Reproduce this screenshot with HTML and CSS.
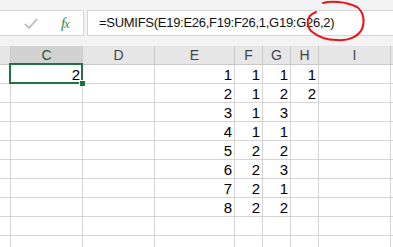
FILE: index.html
```html
<!DOCTYPE html>
<html>
<head>
<title>SUMIFS</title>
<link rel="stylesheet" href="styles.css">
</head>
<body>
<div class="formula-bar">
  <div class="tools">
    <svg class="check" width="14" height="11" viewBox="0 0 14 11"><path d="M1 6 L5 10 L13 1" fill="none" stroke="#c3c3c3" stroke-width="2"/></svg>
    <span class="fx">f<i>x</i></span>
  </div>
  <div class="formula">=SUMIFS(E19:E26,F19:F26,1,G19:G26,2)</div>
  <svg class="scribble" width="70" height="46" viewBox="300 0 70 46"><path d="M323 3 C330 1 345 1 357 7 C364 12 365 22 362 29 C358 37 348 41 337 40 C328 40 318 37 311 31 C306 25 307 18 312 14 L316 12" fill="none" stroke="#e8141a" stroke-width="2" stroke-linecap="round"/></svg>
</div>
<div class="sheet">
  <div class="hd"></div><div class="hd sel">C</div><div class="hd">D</div><div class="hd">E</div><div class="hd">F</div><div class="hd">G</div><div class="hd">H</div><div class="hd">I</div><div class="hd"></div>
</div>
<script>
const sheet = document.querySelector('.sheet');
const rows = [
  ['', '2', '', '1', '1', '1', '1', '', ''],
  ['', '', '', '2', '1', '2', '2', '', ''],
  ['', '', '', '3', '1', '3', '', '', ''],
  ['', '', '', '4', '1', '1', '', '', ''],
  ['', '', '', '5', '2', '2', '', '', ''],
  ['', '', '', '6', '2', '3', '', '', ''],
  ['', '', '', '7', '2', '1', '', '', ''],
  ['', '', '', '8', '2', '2', '', '', ''],
  ['', '', '', '', '', '', '', '', ''],
  ['', '', '', '', '', '', '', '', '']
];
rows.forEach((row, r) => {
  row.forEach((val, c) => {
    const cell = document.createElement('div');
    cell.className = 'cell';
    cell.textContent = val;
    if (r === 0 && c === 1) {
      const box = document.createElement('div');
      box.className = 'active';
      cell.appendChild(box);
    }
    sheet.appendChild(cell);
  });
});
</script>
</body>
</html>
```

FILE: styles.css
```css
body {
  margin: 0;
  background: #f3f3f3;
  font-family: "Liberation Sans", Arial, sans-serif;
  overflow: hidden;
  width: 393px;
  height: 247px;
}

.formula-bar {
  position: relative;
  display: flex;
  gap: 3px;
  padding: 10px 0 10px 0;
  height: 26px;
}

.tools {
  width: 84px;
  box-sizing: border-box;
  background: #fff;
  border: 1px solid #d6d6d6;
  border-left: none;
  display: flex;
  align-items: center;
  padding-left: 24px;
  gap: 23px;
}

.check {
  margin-top: 1px;
}

.fx {
  font-family: "Liberation Serif", serif;
  font-style: italic;
  color: #2f8552;
  font-size: 15px;
  letter-spacing: -1px;
}

.fx i {
  font-size: 12px;
}

.formula {
  flex: 1;
  background: #fff;
  border: 1px solid #d6d6d6;
  border-right: none;
  font-size: 13px;
  letter-spacing: -0.28px;
  line-height: 24px;
  padding-left: 11px;
  color: #111;
}

.scribble {
  position: absolute;
  left: 300px;
  top: 0;
}

.sheet {
  display: grid;
  grid-template-columns: 11px 72px 72px 80px 28px 28px 28px 72px 1fr;
  grid-auto-rows: 19px;
  background: #fff;
}

.hd {
  background: #e6e6e6;
  border-right: 1px solid #cacaca;
  border-bottom: 1px solid #c8c8c8;
  font-size: 14px;
  line-height: 18px;
  text-align: center;
  color: #444;
}

.hd.sel {
  background: #d2d2d2;
  color: #1f5c40;
}

.cell {
  position: relative;
  border-right: 1px solid #d4d4d4;
  border-bottom: 1px solid #d4d4d4;
  font-size: 15px;
  line-height: 19px;
  text-align: right;
  padding-right: 2px;
  color: #000;
}

.active {
  position: absolute;
  z-index: 1;
  left: -2px;
  top: -2px;
  right: -1px;
  bottom: -1px;
  border: 2px solid #217346;
}

.active::after {
  content: "";
  position: absolute;
  right: -4px;
  bottom: -4px;
  width: 5px;
  height: 5px;
  background: #217346;
  border-left: 1px solid #fff;
  border-top: 1px solid #fff;
}
```
